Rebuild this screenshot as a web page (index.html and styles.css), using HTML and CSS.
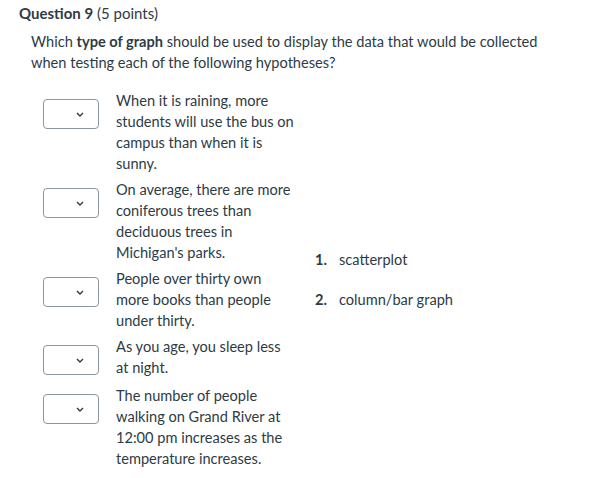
FILE: index.html
```html
<!DOCTYPE html>
<html>
<head>
<meta charset="utf-8">
<link rel="stylesheet" href="styles.css">
</head>
<body>
<div class="question">
  <div class="q-header"><span class="q-title">Question 9</span> <span class="q-points">(5 points)</span></div>
  <div class="q-body">
    <p class="q-text">Which <strong>type of graph</strong> should be used to display the data that would be collected when testing each of the following hypotheses?</p>
    <div class="match">
      <div class="match-rows">
        <div class="match-row">
          <div class="select"><svg width="8" height="5" viewBox="0 0 8 5"><path d="M1 1l3 3 3-3" fill="none" stroke="#2d3b45" stroke-width="1.4"/></svg></div>
          <div class="stmt">When it is raining, more students will use the bus on campus than when it is sunny.</div>
        </div>
        <div class="match-row">
          <div class="select"><svg width="8" height="5" viewBox="0 0 8 5"><path d="M1 1l3 3 3-3" fill="none" stroke="#2d3b45" stroke-width="1.4"/></svg></div>
          <div class="stmt">On average, there are more coniferous trees than deciduous trees in Michigan's parks.</div>
        </div>
        <div class="match-row">
          <div class="select"><svg width="8" height="5" viewBox="0 0 8 5"><path d="M1 1l3 3 3-3" fill="none" stroke="#2d3b45" stroke-width="1.4"/></svg></div>
          <div class="stmt">People over thirty own more books than people under thirty.</div>
        </div>
        <div class="match-row">
          <div class="select"><svg width="8" height="5" viewBox="0 0 8 5"><path d="M1 1l3 3 3-3" fill="none" stroke="#2d3b45" stroke-width="1.4"/></svg></div>
          <div class="stmt">As you age, you sleep less at night.</div>
        </div>
        <div class="match-row">
          <div class="select"><svg width="8" height="5" viewBox="0 0 8 5"><path d="M1 1l3 3 3-3" fill="none" stroke="#2d3b45" stroke-width="1.4"/></svg></div>
          <div class="stmt">The number of people walking on Grand River at 12:00 pm increases as the temperature increases.</div>
        </div>
      </div>
      <ol class="choices">
        <li><span class="num">1.</span><span>scatterplot</span></li>
        <li><span class="num">2.</span><span>column/bar graph</span></li>
      </ol>
    </div>
  </div>
</div>
</body>
</html>
```
FILE: styles.css
```css
html, body {
  margin: 0;
  padding: 0;
  background: #ffffff;
}
body {
  font-family: Lato, "Noto Sans", sans-serif;
  color: #2d3b45;
  font-size: 14.6px;
}
.question {
  padding: 4px 0 0 19px;
}
.q-header {
  font-size: 15px;
  line-height: 18px;
}
.q-title {
  font-weight: 700;
}
.q-body {
  padding: 9px 0 0 12px;
}
.q-text {
  margin: 0;
  line-height: 21px;
  width: 540px;
}
.q-text strong {
  font-weight: 700;
}
.match {
  display: flex;
  align-items: center;
  margin-top: 17px;
}
.match-rows {
  display: flex;
  flex-direction: column;
  gap: 5px;
  width: 270px;
}
.match-row {
  display: flex;
  align-items: flex-start;
  gap: 17px;
}
.select {
  flex: none;
  box-sizing: border-box;
  width: 56px;
  height: 30px;
  margin: 9px 0 5px 12px;
  border: 1px solid #8b969e;
  border-radius: 4px;
  display: flex;
  align-items: center;
  justify-content: flex-end;
  padding-right: 14px;
}
.stmt {
  line-height: 21px;
  width: 179px;
}
.choices {
  list-style: none;
  margin: 0 0 0 14px;
  padding: 0;
  display: flex;
  flex-direction: column;
  gap: 19px;
}
.choices li {
  display: flex;
  line-height: 21px;
}
.num {
  width: 24px;
  font-weight: 700;
}
```
